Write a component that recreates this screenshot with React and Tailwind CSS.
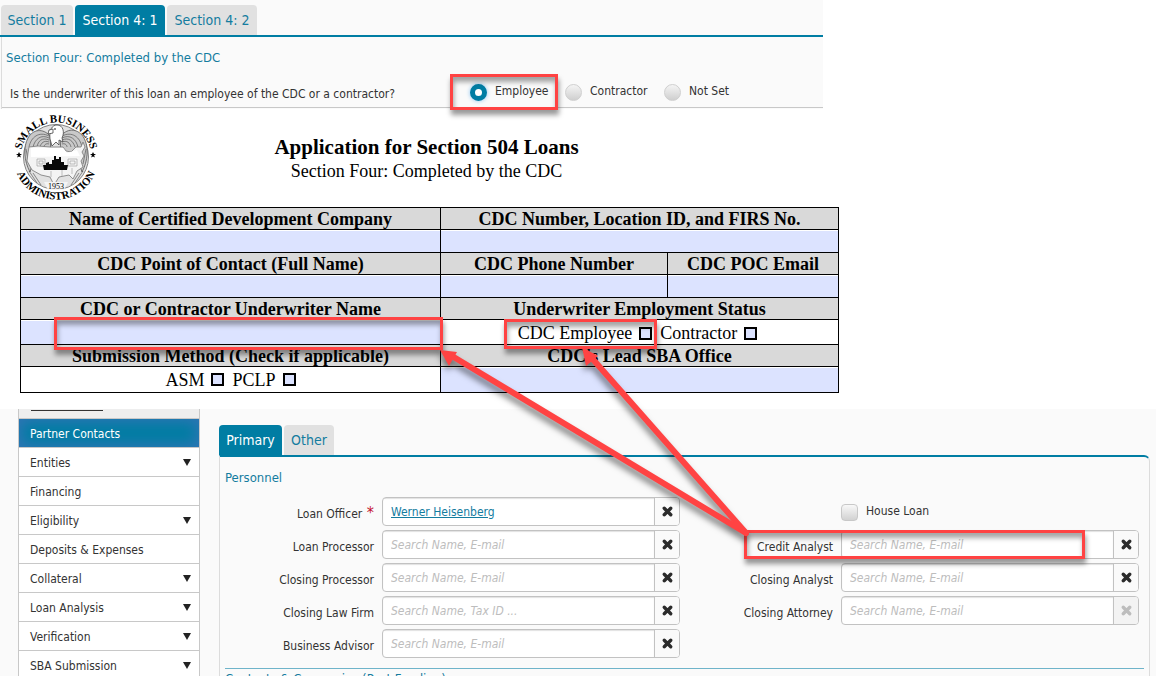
import { FaXmark } from "react-icons/fa6";

const MENU = [
  { label: "Partner Contacts", active: true },
  { label: "Entities", expandable: true },
  { label: "Financing" },
  { label: "Eligibility", expandable: true },
  { label: "Deposits & Expenses" },
  { label: "Collateral", expandable: true },
  { label: "Loan Analysis", expandable: true },
  { label: "Verification", expandable: true },
  { label: "SBA Submission", expandable: true },
];

const LEFT_FIELDS = [
  { id: "officer", label: "Loan Officer", required: true, value: "Werner Heisenberg" },
  { id: "processor", label: "Loan Processor", placeholder: "Search Name, E-mail" },
  { id: "closing-processor", label: "Closing Processor", placeholder: "Search Name, E-mail" },
  { id: "law-firm", label: "Closing Law Firm", placeholder: "Search Name, Tax ID ..." },
  { id: "advisor", label: "Business Advisor", placeholder: "Search Name, E-mail" },
];

const RIGHT_FIELDS = [
  { id: "analyst", label: "Credit Analyst", placeholder: "Search Name, E-mail", marked: true },
  { id: "closing-analyst", label: "Closing Analyst", placeholder: "Search Name, E-mail" },
  { id: "attorney", label: "Closing Attorney", placeholder: "Search Name, E-mail", disabled: true },
];

function Tab({ label, active, className = "" }) {
  return (
    <button
      type="button"
      className={`h-[30px] rounded-t text-sm whitespace-nowrap ${className} ${
        active ? "bg-[#007da3] text-white font-medium" : "bg-[#e1e1e1] text-[#147c9f]"
      }`}
    >
      {label}
    </button>
  );
}

function Highlight({ className }) {
  return (
    <div
      className={`absolute z-10 pointer-events-none border-3 border-[#ff4343] shadow-[1px_5px_5px_rgba(0,0,0,0.4),inset_1px_5px_5px_rgba(0,0,0,0.35)] ${className}`}
    />
  );
}

function Radio({ label, checked, className = "" }) {
  return (
    <label className={`flex items-start ${className}`}>
      <input
        type="radio"
        name="underwriter"
        defaultChecked={checked}
        className="appearance-none mt-[3px] size-[17px] rounded-full border border-[#cfcfcf] bg-linear-to-b from-[#f4f4f4] to-[#cfcfcf] checked:border-5 checked:border-[#007da3] checked:bg-none checked:bg-white checked:shadow-[0_0_4px_#8cc4f0]"
      />
      <span className="ml-2 leading-5">{label}</span>
    </label>
  );
}

function LookupField({ field }) {
  return (
    <div className="relative flex items-center h-[29px]">
      <label htmlFor={field.id} className="w-[157px] pt-1 pr-2 text-right whitespace-nowrap">
        {field.label}
        {field.required && <span className="text-[#c4122f] text-base leading-3"> *</span>}
      </label>
      <div className="flex flex-1 h-full rounded border border-[#c2c2c2] overflow-hidden bg-white">
        <input
          id={field.id}
          defaultValue={field.value}
          placeholder={field.placeholder}
          className="flex-1 min-w-0 px-2 outline-none text-[#147c9f] underline placeholder:italic placeholder:text-[#bdbdbd] placeholder-shown:no-underline shadow-[inset_0_1px_1px_rgba(0,0,0,0.12)]"
        />
        <button
          type="button"
          aria-label={`Clear ${field.label}`}
          disabled={field.disabled}
          className="w-[25px] flex items-center justify-center border-l border-[#c2c2c2] bg-[#fafafa] text-[#2b2b2b] disabled:bg-[#f3f3f3] disabled:text-[#bdbdbd]"
        >
          <FaXmark className="size-[13px]" stroke="currentColor" strokeWidth="70" />
        </button>
      </div>
      {field.marked && <Highlight className="left-[60px] top-0 w-[341px] h-[29px]" />}
    </div>
  );
}

function Seal() {
  return (
    <svg viewBox="0 0 90 96" className="w-[90px] h-24" role="img" aria-label="Small Business Administration seal">
      <defs>
        <path id="ring-top" d="M9.500 49 A35.500 35.500 0 0 1 80.500 49" />
        <path id="ring-low" d="M2.500 48 A42.500 42.500 0 0 0 87.500 48" />
      </defs>
      <circle cx="45" cy="48" r="32.500" fill="#e2e2e2" stroke="#666" strokeWidth=".8" />
      {/* wings */}
      <g fill="#c9c9c9" stroke="#555" strokeWidth=".8">
        <path d="M39 27 C32 19 22 20 17 29 C12 38 13 52 19 63 L24 48 L40 44 Z" />
        <path d="M50 27 C57 18 68 20 73 29 C78 38 77 52 71 63 L66 48 L49 44 Z" />
      </g>
      <g fill="none" stroke="#444" strokeWidth=".6">
        <path d="M38 27 C28 22 20 28 18 38 M38 29 C30 25 24 30 22 38 M38 31 C31 28 27 32 26 38 M38 33 C33 31 30 34 29 38 M38 35 C35 34 33 36 33 38" />
        <path d="M51 27 C61 22 69 28 71 38 M51 29 C59 25 65 30 67 38 M51 31 C58 28 62 32 64 38 M51 33 C56 31 59 34 60 38 M51 35 C54 34 56 36 56 38" />
        <path d="M15 40 L18 55 M75 40 L72 55 M18 62 L26 74 M22 64 L30 76 M72 62 L64 74 M68 64 L60 76" />
      </g>
      {/* map */}
      <path
        d="M18 38 L27 37 L39 38 L52 38 L55 42 L60 43 L65 38 L70 38 L72 33 L74 38 L71 43 L73 47 L70 52 L72 58 L66 62 L62 70 L58 66 L48 68 L43 76 L39 68 L30 66 L21 61 L16 52 L17 44 Z"
        fill="#f4f4f4"
        stroke="#777"
        strokeWidth=".8"
      />
      <path d="M20 39 L52 39 L56 44 L66 41 L69 47 L20 48 Z" fill="#fff" />
      <path d="M26 50 H34 V57 H26 Z M57 50 H66 V57 H57 Z M28 52 H32 V55 H28 Z M59 52 H64 V55 H59 Z M40 62 V68 M51 61 V67 M61 59 V65" stroke="#999" strokeWidth=".6" fill="none" />
      {/* eagle head and neck */}
      <path d="M41 37 L39 30 C38 21 41 16 46 16 C52 16 54 23 51 29 L52 33 L48 31 L48 36 L45 33 Z" fill="#fff" stroke="#444" strokeWidth=".8" />
      <path d="M42 20 L38 21 L37 25 L42 24 Z" fill="#fff" stroke="#444" strokeWidth=".8" />
      <circle cx="44" cy="20" r=".8" />
      <path d="M33 61 L32 56 L35 56 V54 L38 53 V55 H41 V51 H43 V47 H45 V50 H48 V48 H50 V53 H53 V56 L57 56 L56 61 Z" fill="#080808" />
      <path d="M33 73 H57 L53 81 H37 Z" fill="#f4f4f4" />
      <g fontFamily="Liberation Serif, serif" fill="#000">
        <text fontSize="11" fontWeight="700">
          <textPath href="#ring-top" startOffset="50%" textAnchor="middle">SMALL BUSINESS</textPath>
        </text>
        <text fontSize="11" fontWeight="700">
          <textPath href="#ring-low" startOffset="50%" textAnchor="middle">ADMINISTRATION</textPath>
        </text>
        <text x="45" y="80" fontSize="8" textAnchor="middle">1953</text>
      </g>
      <path d="M8 43 l1 2 h2 l-2 1.500 l1 2 l-2 -1 l-2 1 l1 -2 l-2 -1.500 h2 Z M82 43 l1 2 h2 l-2 1.500 l1 2 l-2 -1 l-2 1 l1 -2 l-2 -1.500 h2 Z" />
    </svg>
  );
}

function HeadCell({ children, ...rest }) {
  return (
    <th className="border border-black bg-[#d9d9d9] p-0 pt-px leading-5 font-bold" {...rest}>
      {children}
    </th>
  );
}

function FieldCell({ label, ...rest }) {
  return (
    <td className="border border-black p-0 pt-px" {...rest}>
      <input aria-label={label} className="block w-full h-[21px] bg-[#dce3ff] outline-none" />
    </td>
  );
}

function FormCheck({ label }) {
  return (
    <label className="inline-flex items-center gap-[7px]">
      {label}
      <input type="checkbox" className="appearance-none size-[13px] border-2 border-black bg-[#dce3ff]" />
    </label>
  );
}

function ApplicationForm() {
  return (
    <section className="relative h-[300px] text-black font-['Liberation_Serif',serif]">
      <header className="flex items-start h-[98px]">
        <div className="w-[110px] pl-[11px]">
          <Seal />
        </div>
        <div className="flex-1 pt-[26px] pr-24 text-center">
          <h1 className="text-[21px] leading-6 font-bold">Application for Section 504 Loans</h1>
          <p className="text-lg leading-6">Section Four: Completed by the CDC</p>
        </div>
      </header>
      <div className="relative ml-5">
        <table className="w-full table-fixed border-collapse text-lg text-center">
          <colgroup>
            <col className="w-[420px]" />
            <col className="w-[227px]" />
            <col />
          </colgroup>
          <tbody>
            <tr className="h-[22px]">
              <HeadCell>Name of Certified Development Company</HeadCell>
              <HeadCell colSpan={2}>CDC Number, Location ID, and FIRS No.</HeadCell>
            </tr>
            <tr className="h-[23px]">
              <FieldCell label="Company name" />
              <FieldCell label="CDC number" colSpan={2} />
            </tr>
            <tr className="h-[22px]">
              <HeadCell>CDC Point of Contact (Full Name)</HeadCell>
              <HeadCell>CDC Phone Number</HeadCell>
              <HeadCell>CDC POC Email</HeadCell>
            </tr>
            <tr className="h-[23px]">
              <FieldCell label="Point of contact" />
              <FieldCell label="Phone number" />
              <FieldCell label="Email" />
            </tr>
            <tr className="h-[22px]">
              <HeadCell>CDC or Contractor Underwriter Name</HeadCell>
              <HeadCell colSpan={2}>Underwriter Employment Status</HeadCell>
            </tr>
            <tr className="h-[25px]">
              <td className="border border-black p-0 pt-px">
                <input aria-label="Underwriter name" className="block w-full h-[23px] bg-[#dce3ff] outline-none" />
              </td>
              <td colSpan={2} className="border border-black p-0 pt-0.5 leading-5">
                <div className="flex justify-center gap-2 pr-1">
                  <FormCheck label="CDC Employee" />
                  <FormCheck label="Contractor" />
                </div>
              </td>
            </tr>
            <tr className="h-[22px]">
              <HeadCell>Submission Method (Check if applicable)</HeadCell>
              <HeadCell colSpan={2}>CDC's Lead SBA Office</HeadCell>
            </tr>
            <tr className="h-[26px]">
              <td className="border border-black p-0 leading-6">
                <div className="flex justify-center gap-2">
                  <FormCheck label="ASM" />
                  <FormCheck label="PCLP" />
                </div>
              </td>
              <td colSpan={2} className="border border-black p-0 pt-px">
                <input aria-label="Lead SBA office" className="block w-full h-6 bg-[#dce3ff] outline-none" />
              </td>
            </tr>
          </tbody>
        </table>
        <Highlight className="left-[34px] top-[110px] w-[389px] h-[33px]" />
        <Highlight className="left-[484px] top-[112px] w-[153px] h-[30px]" />
      </div>
    </section>
  );
}

function Arrows() {
  return (
    <svg
      viewBox="0 0 1156 676"
      className="absolute left-0 top-0 z-20 w-[1156px] h-[676px] pointer-events-none"
      aria-hidden="true"
    >
      <g className="drop-shadow-[-1px_5px_3px_rgba(0,0,0,0.5)]" fill="#ff4343" stroke="#ff4343">
        <path d="M746 533 L452 356" strokeWidth="6" strokeLinecap="round" />
        <path d="M746 533 L590 356" strokeWidth="6" strokeLinecap="round" />
        <path d="M440 350 L457 352 L449 366 Z" stroke="none" />
        <path d="M582 347 L598 356 L586 366 Z" stroke="none" />
      </g>
    </svg>
  );
}

export default function App() {
  return (
    <div className="relative h-screen overflow-hidden bg-white text-xs text-[#333] font-['DejaVu_Sans_Condensed','Noto_Sans',sans-serif]">
      <div className="max-w-[823px] h-[109px] bg-[#fafafa] pt-[5px]">
        <div className="flex gap-0.5 pl-px border-b-2 border-[#007da3]">
          <Tab label="Section 1" className="w-[72px]" />
          <Tab label="Section 4: 1" active className="w-[90px]" />
          <Tab label="Section 4: 2" className="w-[90px]" />
        </div>
        <div className="ml-px border-l border-[#dcdcdc] h-[72px] pt-[11px]">
          <h2 className="pl-1 text-[13px] leading-5 text-[#147c9f]">Section Four: Completed by the CDC</h2>
          <div className="flex mt-[13px] pl-2 h-[27px] border-b border-[#c8c8c8]">
            <p className="w-[440px] pt-[3px] leading-5">
              Is the underwriter of this loan an employee of the CDC or a contractor?
            </p>
            <div className="relative flex pl-5">
              <Radio label="Employee" checked className="w-[95px]" />
              <Radio label="Contractor" className="w-[99px]" />
              <Radio label="Not Set" />
              <Highlight className="left-0 -top-[7px] w-[108px] h-9" />
            </div>
          </div>
        </div>
      </div>

      <div className="max-w-[839px]">
        <ApplicationForm />
      </div>

      <div className="flex h-[400px] bg-[#fafafa]">
        <nav className="ml-[18px] w-[182px] shrink-0 border-x border-[#c8c8c8] bg-white">
          <div className="h-[10px] pl-3 bg-[#eee] border-b border-[#c8c8c8]">
            <div className="w-[72px] h-0.5 border-b border-[#333]" />
          </div>
          {MENU.map((item) => (
            <a
              key={item.label}
              href="#"
              className={`flex items-center justify-between h-[29px] pt-0.5 pl-[11px] pr-2 border-b border-[#c8c8c8] ${
                item.active ? "bg-[#007da3] text-white shadow-[inset_0_0_14px_3px_#2f75b5]" : ""
              }`}
            >
              {item.label}
              {item.expandable && (
                <svg viewBox="0 0 8 7" className="w-2 h-[7px] mb-0.5" fill="#222" aria-hidden="true">
                  <path d="M0 0 H8 L4 7 Z" />
                </svg>
              )}
            </a>
          ))}
        </nav>

        <main className="flex-1 ml-[19px] mr-1.5 pt-4">
          <div className="flex gap-0.5">
            <Tab label="Primary" active className="w-[63px]" />
            <Tab label="Other" className="w-[50px]" />
          </div>
          <div className="h-[360px] rounded-tr-md border-t-2 border-x border-x-[#dcdcdc] border-t-[#007da3] px-[5px] pt-[11px]">
            <h2 className="text-[13px] leading-5 text-[#147c9f]">Personnel</h2>
            <div className="flex justify-between mt-[9px] pr-[5px]">
              <div className="w-[455px] space-y-1">
                {LEFT_FIELDS.map((field) => (
                  <LookupField key={field.id} field={field} />
                ))}
              </div>
              <div className="w-[455px] space-y-1">
                <label className="flex items-start h-[29px] pl-[157px] pt-1">
                  <input
                    type="checkbox"
                    className="appearance-none mt-[3px] size-[17px] rounded border border-[#c8c8c8] bg-linear-to-b from-[#f8f8f8] to-[#d2d2d2]"
                  />
                  <span className="ml-2 leading-5">House Loan</span>
                </label>
                {RIGHT_FIELDS.map((field) => (
                  <LookupField key={field.id} field={field} />
                ))}
              </div>
            </div>
            <h2 className="mt-[10px] border-t border-t-[#6fb4ca] pt-0.5 text-[13px] leading-4 text-[#147c9f]">
              Contacts &amp; Companies (Post Funding)
            </h2>
          </div>
        </main>
      </div>
      <Arrows />
    </div>
  );
}
